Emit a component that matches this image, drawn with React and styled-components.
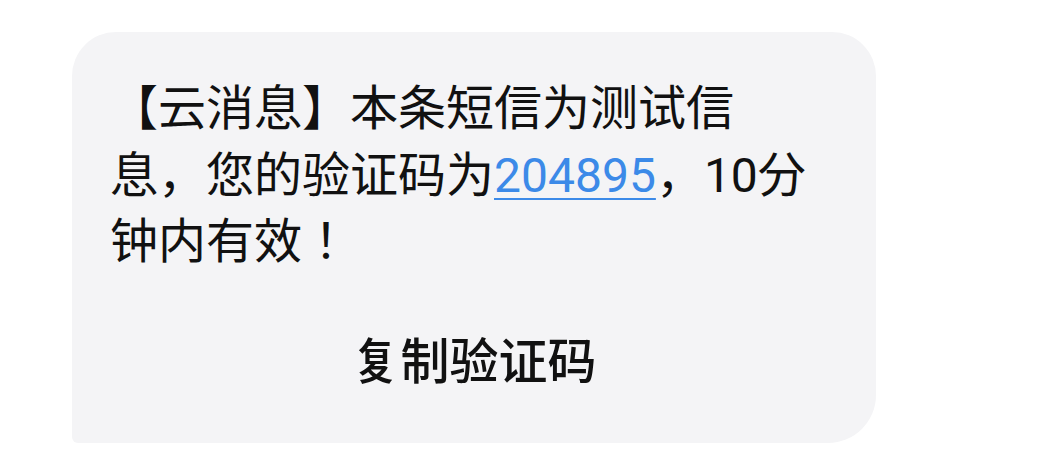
import React from 'react'
import styled, { createGlobalStyle } from 'styled-components'

const GlobalStyle = createGlobalStyle`
  html, body {
    margin: 0;
    padding: 0;
    background: #ffffff;
  }
  body {
    font-family: Roboto, "Noto Sans CJK JP", "Noto Sans CJK SC", sans-serif;
  }
`

const Page = styled.div`
  width: 1045px;
  height: 465px;
  padding: 32px 0 0 72px;
  box-sizing: border-box;
  overflow: hidden;
`

const Bubble = styled.div`
  width: 804px;
  height: 411px;
  box-sizing: border-box;
  background: #f4f4f6;
  border-radius: 44px 44px 48px 6px;
  padding: 44px 50px 0 38px;
  display: flex;
  flex-direction: column;
`

const Body = styled.p`
  margin: 0;
  font-size: 48px;
  line-height: 66.5px;
  color: #111111;
  line-break: strict;
`

const Code = styled.a`
  color: #3c8ae8;
  text-decoration: underline;
  text-decoration-thickness: 2px;
  text-underline-offset: 6px;
`

const CopyButton = styled.button`
  align-self: center;
  margin: 54px 0 0 12px;
  padding: 0;
  border: none;
  background: none;
  font-family: inherit;
  font-size: 49px;
  font-weight: 500;
  line-height: 66px;
  color: #111111;
  cursor: pointer;
`

const App = () => {
  const code = '204895'
  return (
    <>
      <GlobalStyle />
      <Page>
        <Bubble>
          <Body>
            【云消息】本条短信为测试信息，您的验证码为<Code>{code}</Code>，10分钟内有效！
          </Body>
          <CopyButton>复制验证码</CopyButton>
        </Bubble>
      </Page>
    </>
  )
}

export default App
